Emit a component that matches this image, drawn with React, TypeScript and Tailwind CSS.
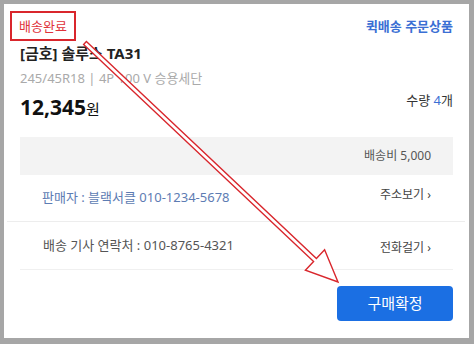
import React from "react";

const font = { fontFamily: '"Noto Sans", "Noto Sans CJK KR", sans-serif' };

// Annotation arrow drawn over the card, in page coordinates
const ArrowOverlay = () => (
    <svg
        className="absolute inset-0 pointer-events-none"
        width={474}
        height={344}
        viewBox="0 0 474 344"
    >
        <polygon
            points="86.4,41.5 316.4,258.5 324.6,249.8 338,282 305.4,270.2 313.6,261.5 83.6,44.5"
            fill="white"
            stroke="#d9262c"
            strokeWidth={1.4}
            strokeLinejoin="miter"
        />
    </svg>
);

const App = () => {
    return (
        <div
            style={font}
            className="relative w-[474px] h-[344px] bg-[#a6a6a6] pt-[4px] pl-[4px] pr-[5px] pb-[6px]"
        >
            <div className="bg-white h-full flex flex-col px-[16px]">
                {/* Header */}
                <div className="mt-[7px] h-[30px] flex items-center justify-between">
                    <span className="-ml-[10px] h-[30px] px-[7px] border-2 border-[#d9262c] text-[13px] leading-[26px] text-[#e0323a]">
                        배송완료
                    </span>
                    <span className="text-[13px] font-semibold text-[#3b6fd4] leading-[18px]">
                        퀵배송 주문상품
                    </span>
                </div>

                {/* Product */}
                <div className="mt-[2px] text-[15px] leading-[20px] font-bold text-[#222]">
                    [금호] 솔루스 TA31
                </div>
                <div className="mt-[6px] text-[13px] leading-[18px] text-[#aaaaaa]">
                    245/45R18 | 4P 100 V 승용세단
                </div>

                <div className="mt-[6px] flex items-start justify-between">
                    <div className="h-[28px] flex items-baseline text-[#111]">
                        <span className="text-[21px] font-bold leading-[28px]">12,345</span>
                        <span className="text-[15px] leading-[28px]">원</span>
                    </div>
                    <div className="-mt-[2px] text-[13px] leading-[18px] text-[#333]">
                        수량 <span className="text-[#3b6fd4]">4</span>개
                    </div>
                </div>

                {/* Delivery fee band */}
                <div className="mt-[16px] h-[38px] bg-[#f3f3f3] flex items-center justify-end pr-[22px] text-[12px] text-[#555]">
                    배송비 5,000
                </div>

                {/* Seller */}
                <div className="h-[46px] flex items-center justify-between pl-[22px] pr-[22px]">
                    <span className="text-[13px] text-[#5d7cb3]">판매자 : 블랙서클 010-1234-5678</span>
                    <span className="-mt-[6px] text-[12px] text-[#444]">주소보기 ›</span>
                </div>
                <div className="h-px bg-[#ededed] -ml-[13px] -mr-[12px]" />

                {/* Driver */}
                <div className="h-[47px] flex items-center justify-between pl-[23px] pr-[22px]">
                    <span className="text-[13px] text-[#555]">배송 기사 연락처 : 010-8765-4321</span>
                    <span className="mt-[4px] text-[12px] text-[#444]">전화걸기 ›</span>
                </div>
                <div className="h-px bg-[#f0f0f0]" />

                {/* Confirm */}
                <div className="mt-[16px] flex justify-end">
                    <button className="w-[116px] h-[35px] rounded-[4px] bg-[#1b6fe3] text-white text-[15px]">
                        구매확정
                    </button>
                </div>
            </div>
            <ArrowOverlay />
        </div>
    );
};

export default App;
